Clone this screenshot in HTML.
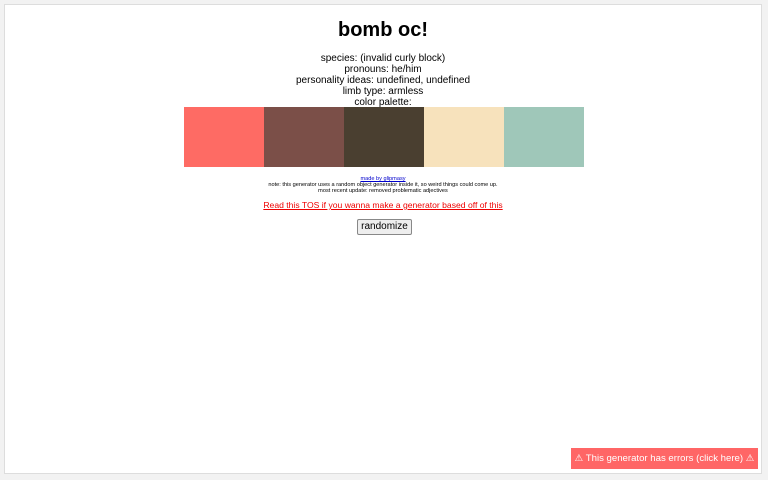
<!DOCTYPE html>
<html><head><style>
html,body{margin:0;background:#f2f2f2;font-family:"Liberation Sans",sans-serif;width:768px;height:480px;overflow:hidden;position:relative}
.frame{position:absolute;left:4px;top:4px;width:758px;height:470px;box-sizing:border-box;background:#fff;border:1px solid #ddd}
h1{position:absolute;top:14px;left:0;width:100%;margin:0;text-align:center;font-size:20px;font-weight:bold}
.info{position:absolute;top:48px;left:0;width:100%;text-align:center;font-size:10px;line-height:11px}
.pal{position:absolute;left:179px;top:102px;display:flex}
.pal div{width:80px;height:60px}
.small{position:absolute;left:0;width:100%;text-align:center;font-size:5.6px;line-height:6px;white-space:nowrap}
.tos{position:absolute;top:195px;left:0;width:100%;text-align:center;font-size:8.6px;color:#e00;text-decoration:underline}
.btn{position:absolute;left:352px;top:214px;width:53px;height:14px;border:1px solid #888;background:#eee;font-size:10px;text-align:center;line-height:14px;border-radius:2px}
.err{position:absolute;left:571px;top:448px;width:187px;height:21px;background:#f66;color:#fff;font-size:9.6px;line-height:21px;text-align:center;white-space:nowrap}
</style></head><body>
<div class="frame">
<h1>bomb oc!</h1>
<div class="info">species: (invalid curly block)<br>pronouns: he/him<br>personality ideas: undefined, undefined<br>limb type: armless<br>color palette:</div>
<div class="pal"><div style="background:#fe6b64"></div><div style="background:#7b4f48"></div><div style="background:#4a3f30"></div><div style="background:#f7e2bc"></div><div style="background:#9fc7b9"></div></div>
<div class="small" style="top:171px;color:#00c;text-decoration:underline">made by glipmasy</div>
<div class="small" style="top:177px">note: this generator uses a random object generator inside it, so weird things could come up.</div>
<div class="small" style="top:183px">most recent update: removed problematic adjectives</div>
<div class="tos">Read this TOS if you wanna make a generator based off of this</div>
<div class="btn">randomize</div>
</div>
<div class="err">⚠ This generator has errors (click here) ⚠</div>
</body></html>
